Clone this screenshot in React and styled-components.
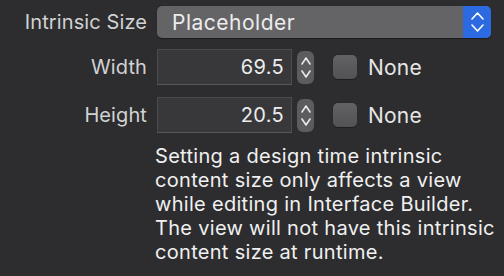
import React from "react";
import styled, { createGlobalStyle } from "styled-components";

const Global = createGlobalStyle`
  html, body { margin: 0; padding: 0; background: #2d2d2f; }
  body { font-family: Inter, "Noto Sans", sans-serif; -webkit-font-smoothing: antialiased; }
`;

const Panel = styled.div`
  width: 504px;
  height: 276px;
  box-sizing: border-box;
  background: #2d2d2f;
  padding-top: 6px;
  overflow: hidden;
`;

const Grid = styled.div`
  display: grid;
  grid-template-columns: 147px 1fr;
  column-gap: 10px;
  align-items: center;
`;

const Label = styled.div`
  text-align: right;
  color: #d2d2d3;
  font-size: 20px;
  letter-spacing: 0.1px;
  line-height: 24px;
  margin-top: ${(p) => p.$mt || 0}px;
`;

const Cell = styled.div`
  display: flex;
  align-items: center;
  height: ${(p) => p.$h}px;
  margin-top: ${(p) => p.$mt || 0}px;
`;

const Popup = styled.div`
  width: 334px;
  height: 32px;
  box-sizing: border-box;
  border-radius: 5px;
  background: #646466;
  display: flex;
  align-items: stretch;
  overflow: hidden;
  box-shadow: 0 0.5px 1px rgba(0,0,0,0.4);
`;

const PopupText = styled.div`
  flex: 1;
  display: flex;
  align-items: center;
  padding-left: 15px;
  color: #ececec;
  font-size: 21px;
  letter-spacing: 0.5px;
`;

const PopupArrows = styled.div`
  width: 28px;
  background: #2b6ae0;
  display: flex;
  align-items: center;
  justify-content: center;
`;

const Field = styled.div`
  width: 135px;
  height: 36px;
  box-sizing: border-box;
  background: #38383a;
  border: 1px solid #4c4c4e;
  border-bottom-color: #58585a;
  display: flex;
  align-items: center;
  justify-content: flex-end;
  padding-right: 7px;
  color: #ececec;
  font-size: 20px;
  letter-spacing: 0.3px;
`;

const Stepper = styled.div`
  width: 17px;
  height: 33px;
  margin-left: 5px;
  border-radius: 6px;
  background: #5c5c5e;
  display: flex;
  align-items: center;
  justify-content: center;
`;

const Check = styled.div`
  width: 24px;
  height: 24px;
  margin-left: 19px;
  box-sizing: border-box;
  border-radius: 5px;
  background: linear-gradient(#626264, #525254);
  box-shadow: 0 0.5px 1px rgba(0,0,0,0.35);
`;

const CheckLabel = styled.div`
  margin-left: 11px;
  color: #e6e6e6;
  font-size: 21px;
  letter-spacing: 0.2px;
`;

const Note = styled.p`
  margin: 11px 0 0 155px;
  width: 344px;
  color: #f0f0f0;
  font-size: 20px;
  line-height: 24px;
  letter-spacing: 0.3px;
`;

const UpDown = ({ w, h, gap, stroke }) => (
  <svg width={w} height={h} viewBox={`0 0 ${w} ${h}`} fill="none">
    <polyline
      points={`1,${h / 2 - gap / 2} ${w / 2},1 ${w - 1},${h / 2 - gap / 2}`}
      stroke={stroke}
      strokeWidth="1.6"
      strokeLinecap="round"
      strokeLinejoin="round"
    />
    <polyline
      points={`1,${h / 2 + gap / 2} ${w / 2},${h - 1} ${w - 1},${h / 2 + gap / 2}`}
      stroke={stroke}
      strokeWidth="1.6"
      strokeLinecap="round"
      strokeLinejoin="round"
    />
  </svg>
);

const SizeRow = ({ label, value, mt }) => (
  <>
    <Label $mt={mt}>{label}</Label>
    <Cell $h={36} $mt={mt}>
      <Field>{value}</Field>
      <Stepper>
        <UpDown w={10} h={21} gap={7} stroke="#e8e8e8" />
      </Stepper>
      <Check />
      <CheckLabel>None</CheckLabel>
    </Cell>
  </>
);

export default function App() {
  return (
    <Panel>
      <Global />
      <Grid>
        <Label>Intrinsic Size</Label>
        <Cell $h={32}>
          <Popup>
            <PopupText>Placeholder</PopupText>
            <PopupArrows>
              <UpDown w={13} h={20} gap={6} stroke="#ffffff" />
            </PopupArrows>
          </Popup>
        </Cell>
        <SizeRow label="Width" value="69.5" mt={11} />
        <SizeRow label="Height" value="20.5" mt={12} />
      </Grid>
      <Note>
        Setting a design time intrinsic content size only affects a view while
        editing in Interface Builder. The view will not have this intrinsic
        content size at runtime.
      </Note>
    </Panel>
  );
}
